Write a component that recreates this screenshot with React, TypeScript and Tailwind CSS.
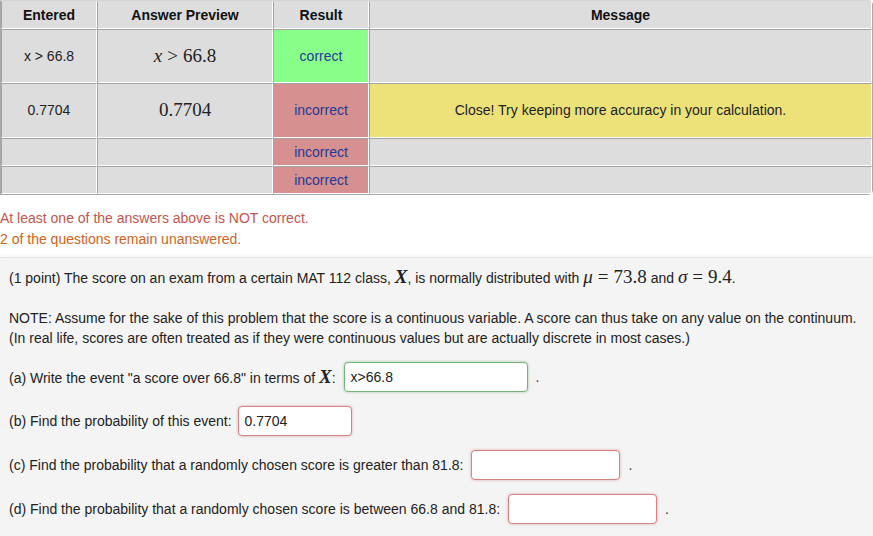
import React from 'react';

const serif = "font-['Liberation_Serif','Times_New_Roman',serif]";

const Cell: React.FC<{ className?: string; children?: React.ReactNode }> = ({ className = '', children }) => (
  <td className={`border-t border-l border-t-[#a3a3a3] border-l-[#a3a3a3] border-b border-r border-b-white border-r-white text-center align-middle ${className}`}>
    {children}
  </td>
);

const Input: React.FC<{ value?: string; ok?: boolean; w: string }> = ({ value = '', ok, w }) => (
  <div
    className={`h-[30px] ${w} rounded-[4px] bg-white border flex items-center px-[6px] text-[14px] text-[#222] ${
      ok
        ? 'border-[#74b474] shadow-[0_0_3px_rgba(60,140,60,0.45)]'
        : 'border-[#d98080] shadow-[0_0_3px_rgba(200,80,80,0.45)]'
    }`}
  >
    {value}
  </div>
);

const Dot = () => <span className="ml-[8px] text-[#334]">.</span>;

const Op: React.FC<{ children: React.ReactNode }> = ({ children }) => <span className="mx-[5px]">{children}</span>;

export default function App() {
  return (
    <div className="w-[873px] h-[536px] overflow-hidden bg-white font-['Liberation_Sans',Arial,sans-serif] text-[14px] text-[#222]">
      <table className="table-fixed border-separate border-spacing-0 w-[873px] border border-[#a8a8a8] border-t-[#d6d6d6] rounded-r-[5px] bg-white">
        <colgroup>
          <col className="w-[96px]" />
          <col className="w-[176px]" />
          <col className="w-[96px]" />
          <col />
        </colgroup>
        <thead>
          <tr className="h-[28px] font-bold text-[#111]">
            <Cell className="bg-[#dddddd] border-t-transparent">Entered</Cell>
            <Cell className="bg-[#dddddd] border-t-transparent">Answer Preview</Cell>
            <Cell className="bg-[#dddddd] border-t-transparent">Result</Cell>
            <Cell className="bg-[#dddddd] border-t-transparent">Message</Cell>
          </tr>
        </thead>
        <tbody>
          <tr className="h-[54px]">
            <Cell className="bg-[#dddddd]">x &gt; 66.8</Cell>
            <Cell className={`bg-[#dddddd] ${serif} text-[19px]`}>
              <i>x</i>
              <Op>&gt;</Op>66.8
            </Cell>
            <Cell className="bg-[#88ff88] text-[#22399a]">correct</Cell>
            <Cell className="bg-[#dddddd]" />
          </tr>
          <tr className="h-[55px]">
            <Cell className="bg-[#dddddd]">0.7704</Cell>
            <Cell className={`bg-[#dddddd] ${serif} text-[19px]`}>0.7704</Cell>
            <Cell className="bg-[#d69090] text-[#22399a]">incorrect</Cell>
            <Cell className="bg-[#ede27a]">Close! Try keeping more accuracy in your calculation.</Cell>
          </tr>
          <tr className="h-[28px]">
            <Cell className="bg-[#dddddd]" />
            <Cell className="bg-[#dddddd]" />
            <Cell className="bg-[#d69090] text-[#22399a]">incorrect</Cell>
            <Cell className="bg-[#dddddd]" />
          </tr>
          <tr className="h-[28px]">
            <Cell className="bg-[#dddddd]" />
            <Cell className="bg-[#dddddd]" />
            <Cell className="bg-[#d69090] text-[#22399a]">incorrect</Cell>
            <Cell className="bg-[#dddddd]" />
          </tr>
        </tbody>
      </table>

      <div className="mt-[13px] leading-[21px]">
        <div className="text-[#c4554c]">At least one of the answers above is NOT correct.</div>
        <div className="text-[#cc6424]">2 of the questions remain unanswered.</div>
      </div>

      <div className="mt-[7px] h-[300px] bg-[#f4f4f4] border-t border-[#e6e6e6] shadow-[0_-1px_3px_rgba(0,0,0,0.06)] px-[9px] pt-[8px]">
        <p className="leading-[22px]">
          (1 point) The score on an exam from a certain MAT 112 class,{' '}
          <span className={`${serif} text-[19px] italic font-bold`}>X</span>, is normally distributed with{' '}
          <span className={`${serif} text-[19px]`}>
            <i>μ</i>
            <Op>=</Op>73.8
          </span>{' '}
          and{' '}
          <span className={`${serif} text-[19px]`}>
            <i>σ</i>
            <Op>=</Op>9.4
          </span>
          .
        </p>

        <p className="mt-[19px] leading-[20px]">
          NOTE: Assume for the sake of this problem that the score is a continuous variable. A score can thus take on any value on the continuum.
          <br />
          (In real life, scores are often treated as if they were continuous values but are actually discrete in most cases.)
        </p>

        <div className="mt-[14px] flex items-center h-[30px]">
          <span>
            (a) Write the event "a score over 66.8" in terms of{' '}
            <span className={`${serif} text-[19px] italic font-bold`}>X</span>:
          </span>
          <div className="ml-[8px]">
            <Input value="x>66.8" ok w="w-[184px]" />
          </div>
          <Dot />
        </div>

        <div className="mt-[14px] flex items-center h-[30px]">
          <span>(b) Find the probability of this event:</span>
          <div className="ml-[6px]">
            <Input value="0.7704" w="w-[114px]" />
          </div>
        </div>

        <div className="mt-[14px] flex items-center h-[30px]">
          <span>(c) Find the probability that a randomly chosen score is greater than 81.8:</span>
          <div className="ml-[8px]">
            <Input w="w-[149px]" />
          </div>
          <Dot />
        </div>

        <div className="mt-[14px] flex items-center h-[30px]">
          <span>(d) Find the probability that a randomly chosen score is between 66.8 and 81.8:</span>
          <div className="ml-[8px]">
            <Input w="w-[149px]" />
          </div>
          <Dot />
        </div>
      </div>
    </div>
  );
}
